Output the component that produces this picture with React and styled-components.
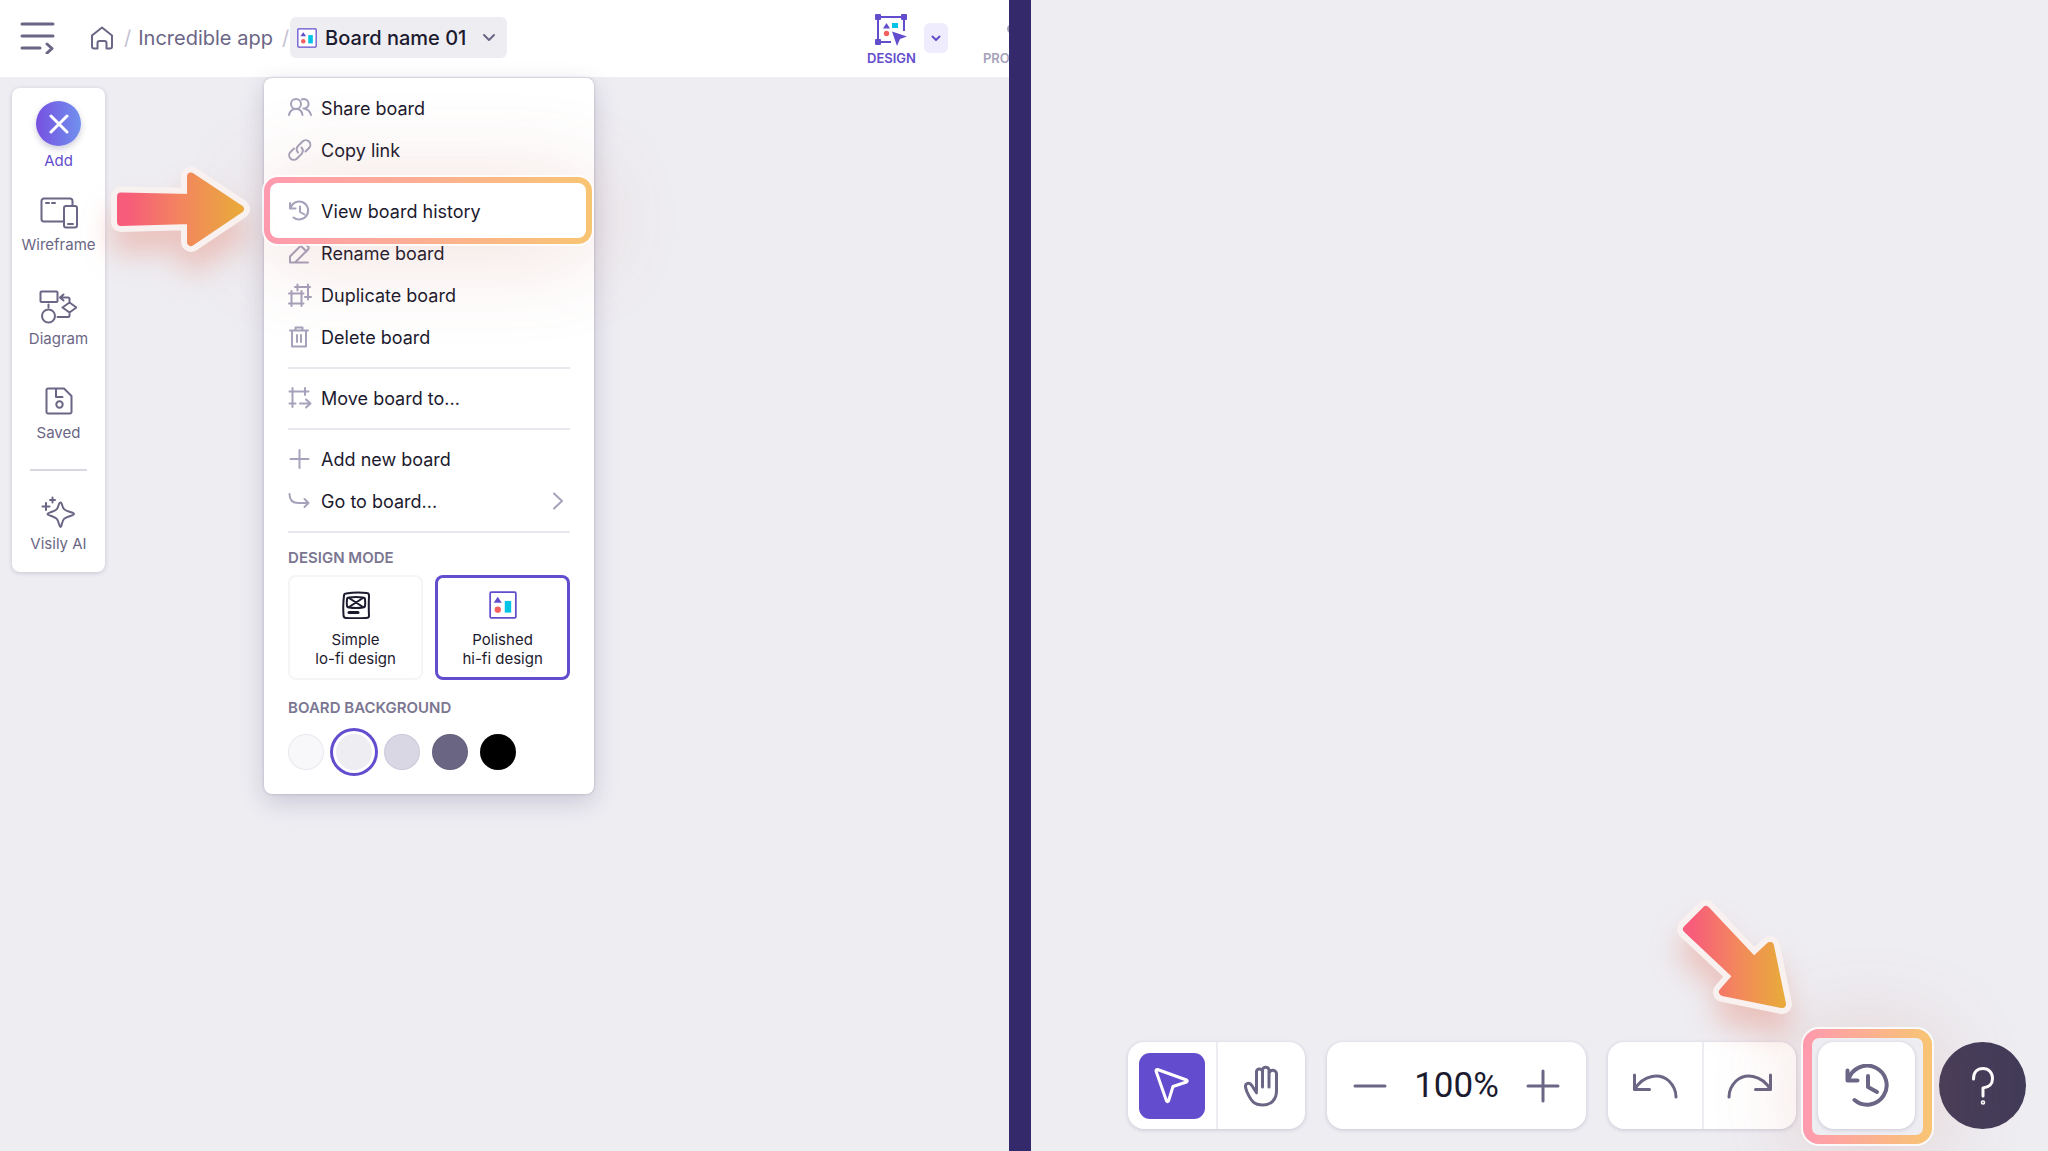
import { useState } from 'react'
import styled, { createGlobalStyle, css } from 'styled-components'

const ink = '#1c1a2e'
const slate = '#6b6685'
const mist = '#a6a2bb'
const violet = '#634dce'
const canvas = '#eeedf2'
const warm = 'linear-gradient(90deg, #ff9aaf, #f8c573)'
const glow = '0 0 0 2px rgba(255, 255, 255, 0.8), 0 8px 90px 4px rgba(180, 96, 76, 0.2)'

const menuGroups = [
  [
    { icon: 'people', label: 'Share board' },
    { icon: 'link', label: 'Copy link' },
  ],
  [
    { icon: 'history', label: 'View board history', marked: true },
    { icon: 'pencil', label: 'Rename board' },
    { icon: 'frames', label: 'Duplicate board' },
    { icon: 'trash', label: 'Delete board' },
  ],
  [{ icon: 'move', label: 'Move board to...' }],
  [
    { icon: 'plus', label: 'Add new board' },
    { icon: 'goto', label: 'Go to board...', more: true },
  ],
]

const swatches = [
  { name: 'Snow', color: '#f8f8fa' },
  { name: 'Fog', color: '#eeedf2' },
  { name: 'Lavender', color: '#d9d7e4' },
  { name: 'Slate', color: '#6a6582' },
  { name: 'Black', color: '#000000' },
]

export default function App() {
  const [mode, setMode] = useState('polished')
  const [background, setBackground] = useState('Fog')

  return (
    <Page>
      <GlobalStyle />
      <Pane>
        <Header>
          <PlainButton aria-label='Menu'>
            <Line width='35' height='32' sw='3'>
              <path d='M2 2h31M2 14h31M2 26h18M27 22l5 4.500-5 4.500' />
            </Line>
          </PlainButton>
          <Crumbs>
            <HomeLink href='#home' aria-label='Home'>
              <Line width='24' height='24' sw='2'>
                <path d='M2 9.500L12 1.500l10 8V20.500a2 2 0 0 1-2 2h-3.500V17a2 2 0 0 0-2-2h-5a2 2 0 0 0-2 2v5.500H4a2 2 0 0 1-2-2z' />
              </Line>
            </HomeLink>
            <Slash>/</Slash>
            <AppLink href='#app'>Incredible app</AppLink>
            <Slash>/</Slash>
          </Crumbs>
          <BoardPicker>
            <BoardButton>
              <HifiIcon size={20} />
              Board name 01
              <Line width='14' height='9' sw='2'><path d='M2 2l5 5 5-5' /></Line>
            </BoardButton>
            <Menu>
              {menuGroups.map((group, i) => (
                <MenuGroup key={i}>
                  {group.map(item => (
                    <MenuItem key={item.label} $marked={item.marked}>
                      <MenuIcon name={item.icon} />
                      <span>{item.label}</span>
                      {item.more && <Line width='12' height='18' sw='2'><path d='M2 1.500l8 7.500-8 7.500' /></Line>}
                    </MenuItem>
                  ))}
                </MenuGroup>
              ))}
              <Section>
                <Legend>DESIGN MODE</Legend>
                <Modes>
                  <ModeCard $on={mode === 'simple'}>
                    <HiddenInput type='radio' name='mode' checked={mode === 'simple'} onChange={() => setMode('simple')} />
                    <LofiIcon />
                    <span>Simple<br />lo-fi design</span>
                  </ModeCard>
                  <ModeCard $on={mode === 'polished'}>
                    <HiddenInput type='radio' name='mode' checked={mode === 'polished'} onChange={() => setMode('polished')} />
                    <HifiIcon size={28} />
                    <span>Polished<br />hi-fi design</span>
                  </ModeCard>
                </Modes>
              </Section>
              <Section>
                <Legend>BOARD BACKGROUND</Legend>
                <Swatches>
                  {swatches.map(s => (
                    <Swatch key={s.name} $color={s.color} $on={background === s.name}>
                      <HiddenInput
                        type='radio'
                        name='background'
                        aria-label={s.name}
                        checked={background === s.name}
                        onChange={() => setBackground(s.name)}
                      />
                    </Swatch>
                  ))}
                </Swatches>
              </Section>
            </Menu>
          </BoardPicker>
          <Tabs>
            <Tab $on>
              <DesignIcon />
              DESIGN
            </Tab>
            <TabMore aria-label='Design options'>
              <Line width='10' height='7' sw='2'><path d='M1.500 1.500L5 5l3.500-3.500' /></Line>
            </TabMore>
            <Tab>
              <Line width='32' height='32' sw='2'><circle cx='5' cy='15' r='3' /><path d='M8 15h16' /></Line>
              PROTOTYPE
            </Tab>
          </Tabs>
        </Header>

        <Sidebar>
          <AddTool>
            <AddCircle>
              <Line width='20' height='20' sw='3'><path d='M2 2l16 16M18 2L2 18' /></Line>
            </AddCircle>
            Add
          </AddTool>
          <Tools>
            <Tool>
              <ToolIcon>
                <Line width='38' height='32' sw='2'>
                  <path d='M24 24.500H4a2.500 2.500 0 0 1-2.500-2.500V4A2.500 2.500 0 0 1 4 1.500h26A2.500 2.500 0 0 1 32.500 4v4M6 6h3M12 6h3M28 27h5' />
                  <rect x='24' y='9' width='13' height='21.500' rx='2' />
                </Line>
              </ToolIcon>
              Wireframe
            </Tool>
            <Tool>
              <ToolIcon>
                <Line width='38' height='34' sw='2'>
                  <rect x='1.500' y='1.500' width='17' height='10.500' rx='1' />
                  <circle cx='9.500' cy='26' r='6.500' />
                  <path d='M9.500 14.500v3M18.500 27H29q1.500 0 1.500-1.500V24M30.500 11.500V9q0-1.500-1.500-1.500h-8M24.500 4.500l-3.500 3 3.500 3' />
                  <path d='M30.500 12.500l7 5-7 5-7-5z' />
                </Line>
              </ToolIcon>
              Diagram
            </Tool>
            <Tool>
              <ToolIcon>
                <Line width='28' height='28' sw='2'>
                  <path d='M3 1.500h16l7.500 7.500v16a1.500 1.500 0 0 1-1.500 1.500H3A1.500 1.500 0 0 1 1.500 25V3A1.500 1.500 0 0 1 3 1.500zM11 1.500v8.500h6.500' />
                  <circle cx='14.500' cy='17.500' r='3.200' />
                </Line>
              </ToolIcon>
              Saved
            </Tool>
          </Tools>
          <SideRule />
          <Tool>
            <ToolIcon>
              <Line width='34' height='34' sw='2'>
                <path d='M19.500 7.500c.8 0 1 .5 1.300 1.500 1.400 5 2 6 7.700 7.800 2.700.9 4.500 1.200 4.500 2.200s-1.800 1.400-4.500 2.200c-5.700 1.800-6.300 2.800-7.700 7.800-.3 1.600-.6 3-1.300 3s-1-1.400-1.500-3c-1.500-5-2-6-7-7.800-2.400-.8-4.500-1.200-4.500-2.200s2.100-1.300 4.500-2.200c5-1.800 5.500-2.800 7-7.800.4-1 .7-1.500 1.500-1.500zM5 8v7M1.500 11.500h7M11.500 2.500v5M9 5h5' />
              </Line>
            </ToolIcon>
            Visily AI
          </Tool>
        </Sidebar>

        <LeftArrow viewBox='0 0 160 100' width='160' height='100'>
          <defs>
            <linearGradient id='warmA' x1='0' x2='1'>
              <stop offset='0.06' stopColor='#f75c7a' />
              <stop offset='0.5' stopColor='#f3855f' />
              <stop offset='1' stopColor='#e9a93b' />
            </linearGradient>
          </defs>
          <ArrowHalo d='M13 36.500L83 38V16.500L132 49 83 82V60L13 62z' />
          <ArrowBody fill='url(#warmA)' stroke='url(#warmA)' d='M13 36.500L83 38V16.500L132 49 83 82V60L13 62z' />
        </LeftArrow>
      </Pane>

      <Divider />

      <Pane>
        <Bottom>
          <BarGroup>
            <BarCell $wide={88}>
              <ActiveTool aria-label='Select'>
                <Line width='38' height='38' sw='3'>
                  <path d='M4.500 2.500L33.500 13q1.500 1 0 2L20 19.500 15.500 34q-1 1.500-2 0L3 4q0-1.500 1.500-1.500z' />
                </Line>
              </ActiveTool>
            </BarCell>
            <BarCell $wide={89}>
              <PlainButton aria-label='Pan'>
                <Line width='36' height='42' sw='3'>
                  <path d='M12.500 26V7.500a2.800 2.800 0 0 1 6-1V22M18.500 8V5a3.300 3.300 0 0 1 6.500 0v17M25 8.500a3.500 3.500 0 0 1 7.500 1V26c0 9-6 14-13.500 14C10 40 7 36 2.800 26.500L1.700 23c-.6-2.500 0-4 1.800-4.600 2-.6 3.300.4 4.500 2.400l4.500 7' />
                </Line>
              </PlainButton>
            </BarCell>
          </BarGroup>
          <BarGroup>
            <Zoom>
              <PlainButton aria-label='Zoom out'>
                <Line width='34' height='34' sw='3'><path d='M2 17h30' /></Line>
              </PlainButton>
              <ZoomValue>100%</ZoomValue>
              <PlainButton aria-label='Zoom in'>
                <Line width='34' height='34' sw='3'><path d='M2 17h30M17 2v30' /></Line>
              </PlainButton>
            </Zoom>
          </BarGroup>
          <BarGroup>
            <BarCell $wide={94}>
              <PlainButton aria-label='Undo'>
                <Line width='46' height='26' sw='3'><path d='M2.500 2v14.500h15M2.500 16.500C12 1 28 0 37 8q7 7 7 16' /></Line>
              </PlainButton>
            </BarCell>
            <BarCell $wide={94}>
              <PlainButton aria-label='Redo'>
                <Line width='46' height='26' sw='3'><path d='M43.500 2v14.500h-15M43.500 16.500C34 1 18 0 9 8q-7 7-7 16' /></Line>
              </PlainButton>
            </BarCell>
          </BarGroup>
          <MarkedGroup>
            <BarCell $wide={97}>
              <PlainButton aria-label='Board history'>
                <Line width='44' height='44' sw='4'>
                  <path d='M2.500 6.500v10h10M3.500 15.500A19.500 19.500 0 1 1 9.500 36' />
                  <path d='M23 12v11l9 5' />
                </Line>
              </PlainButton>
            </BarCell>
          </MarkedGroup>
          <HelpButton aria-label='Help'>
            <Line width='24' height='40' sw='3'>
              <path d='M2.500 13c0-7 4-10.500 9.500-10.500s9.500 4 9.500 10-3 8.500-9.500 9.500v8' />
              <circle cx='12' cy='36.500' r='0.800' />
            </Line>
          </HelpButton>
          <RightArrow viewBox='0 0 140 140' width='140' height='140'>
            <defs>
              <linearGradient id='warmB' x1='0' x2='1'>
                <stop offset='0.05' stopColor='#f75c7a' />
                <stop offset='0.5' stopColor='#f3855f' />
                <stop offset='1' stopColor='#e9a93b' />
              </linearGradient>
            </defs>
            <ArrowHalo d='M40 26L21 45 71 92 57 108 116 120 104 62 88 77z' />
            <ArrowBody fill='url(#warmB)' stroke='url(#warmB)' d='M40 26L21 45 71 92 57 108 116 120 104 62 88 77z' />
          </RightArrow>
        </Bottom>
      </Pane>
    </Page>
  )
}

// stroke icon, drawn 1:1 with its box
function Line({ width, height, sw, children }) {
  return (
    <svg
      width={width}
      height={height}
      viewBox={`0 0 ${width} ${height}`}
      fill='none'
      stroke='currentColor'
      strokeWidth={sw}
      strokeLinecap='round'
      strokeLinejoin='round'
      aria-hidden='true'
    >
      {children}
    </svg>
  )
}

function MenuIcon({ name }) {
  const shapes = {
    people: (
      <>
        <circle cx='8' cy='8' r='5' />
        <path d='M1 19c.8-4 3-6 7-6s6 2 6.500 6M14 3.500a4.700 4.700 0 1 1 1.500 9M17 13c3.500.5 5 2.500 6 6' />
      </>
    ),
    link: <path d='M10 14.500a5 5 0 0 1 0-6.500l4.500-4.500a4.500 4.500 0 0 1 6.500 6.500l-3.500 3.500M13.500 9.500a5 5 0 0 1 0 6.500L9 20.500A4.500 4.500 0 0 1 2.500 14L6 10.500' />,
    history: <path d='M2 4v5.500h5.500M2.500 9A9 9 0 1 1 5.500 18.500M12 7.500V13l4.500 2.500' />,
    pencil: <path d='M2 21.500h18M2 21.500v-6L14.500 3q1.500-1.500 3 0l2.500 2.500q1.500 1.500 0 3L7 21.500M13 5l5.500 5.500' />,
    frames: <path d='M1 10.500h14.500M1 20.500h14.500M3.500 8v15M13.500 8v15M7 4h15M9.500 1.500v6M20 1.500v15M17 14h6' />,
    trash: <path d='M2 5.500h18M4 5.500v16h14v-16M7.500 5V2.500h7V5M9 10v7M13 10v7' />,
    move: <path d='M1.500 5.500h19M1.500 17.500h6M4.500 2v19M17 2v7M12 17.500h10M18 13.500l4.500 4-4.500 4' />,
    plus: <path d='M2.500 12h18M11.500 3v18' />,
    goto: <path d='M1.500 5c0 6 3 9 9 9h10M16.500 10l4 4-4 4' />,
  }
  return <Line width='24' height='24' sw='2'>{shapes[name]}</Line>
}

function HifiIcon({ size }) {
  return (
    <svg width={size} height={size} viewBox='1 1 24 24' aria-hidden='true'>
      <rect x='2' y='2' width='22' height='22' rx='1' fill='#fff' stroke={violet} strokeWidth='1.500' />
      <path d='M8.500 6l3.500 5H5z' fill={violet} />
      <circle cx='8.500' cy='17' r='2.700' fill='#f65f5f' />
      <rect x='14.500' y='9.500' width='5.500' height='10' fill='#00c3e6' />
    </svg>
  )
}

function LofiIcon() {
  return (
    <svg width='28' height='28' viewBox='0 0 28 28' fill='none' stroke={ink} strokeWidth='2' strokeLinecap='round' aria-hidden='true'>
      <path d='M4 2.500Q14 1 25 2q2 0 2 3-.5 10 0 20 0 2-3 2Q14 27.500 4 27q-2.500 0-2.500-3Q.8 14 2 4.500q.3-2 2-2z' />
      <path d='M7 6.500q7-1 14 0 2 0 2 2 .5 4 0 6 0 2-2 2-7 1-14 0-2 0-2-2-.5-3 0-6 0-2 2-2zM7 7l14 9M21 7l-14 9' />
      <path d='M7 21.500h9' strokeWidth='3' />
    </svg>
  )
}

function DesignIcon() {
  return (
    <svg width='32' height='32' viewBox='0 0 32 32' fill={violet} aria-hidden='true'>
      <path d='M3 3h26v14M3 3v25h13' fill='none' stroke={violet} strokeWidth='2' />
      <rect x='0' y='0' width='6' height='6' rx='1' />
      <rect x='26' y='0' width='6' height='6' rx='1' />
      <rect x='0' y='25' width='6' height='6' rx='1' />
      <path d='M11.500 9l3.500 5.500H8z' />
      <rect x='17' y='9' width='6' height='5' fill='#00c3e6' />
      <circle cx='11.500' cy='19.500' r='2.700' fill='#f65f5f' />
      <path d='M17 17.500l15 5-7 2.500-3 7z' />
    </svg>
  )
}

const GlobalStyle = createGlobalStyle`
  body {
    margin: 0;
    font-family: Inter, Roboto, sans-serif;
    color: ${ink};
    background: ${canvas};
  }
  *, *::before {
    box-sizing: border-box;
  }
  svg {
    display: block;
    flex: none;
  }
  button {
    font: inherit;
    color: inherit;
    border: 0;
    padding: 0;
    background: none;
    cursor: pointer;
  }
`

const Page = styled.main`
  display: grid;
  grid-template-columns: minmax(0, 1009fr) 22px minmax(0, 1017fr);
  min-height: 100vh;
  overflow: hidden;
`

const Pane = styled.section`
  position: relative;
  display: flex;
  flex-direction: column;
  background: ${canvas};
`

const Divider = styled.div`
  position: relative;
  z-index: 3;
  background: #33296b;
`

const PlainButton = styled.button`
  display: flex;
  color: ${slate};
`

const Header = styled.header`
  display: flex;
  align-items: center;
  height: 77px;
  padding: 0 0 2px 20px;
  background: #fff;
`

const Crumbs = styled.nav`
  display: flex;
  align-items: center;
  margin-left: 35px;
  font-size: 20px;
  line-height: 28px;
`

const HomeLink = styled.a`
  margin-right: 10px;
  color: ${slate};
`

const AppLink = styled.a`
  margin: 0 9px 0 7px;
  color: ${slate};
  text-decoration: none;
`

const Slash = styled.span`
  color: #c4c1d2;
`

const BoardPicker = styled.div`
  position: relative;
  z-index: 2;
`

const BoardButton = styled.button`
  display: flex;
  align-items: center;
  gap: 8px;
  height: 41px;
  margin-left: 1px;
  padding: 0 11px 0 7px;
  border-radius: 6px;
  background: ${canvas};
  font-size: 20px;
  font-weight: 500;
  white-space: nowrap;

  svg:last-child {
    margin-left: 8px;
    color: ${slate};
  }
`

const Menu = styled.div`
  position: absolute;
  top: calc(100% + 20px);
  left: -25px;
  width: 330px;
  padding: 9px 24px 24px;
  border-radius: 8px;
  background: #fff;
  box-shadow: 0 8px 24px rgba(60, 50, 100, 0.2), 0 0 3px rgba(60, 50, 100, 0.25);
`

const MenuGroup = styled.div`
  &::after {
    content: '';
    display: block;
    height: 2px;
    margin: 9px 0 8px;
    background: #e9e8ee;
  }
`

const MenuItem = styled.button`
  position: relative;
  display: flex;
  align-items: center;
  gap: 9px;
  width: 100%;
  height: 42px;
  text-align: left;
  font-size: 18px;

  svg {
    position: relative;
    color: ${mist};
  }
  span {
    position: relative;
    flex: 1;
  }
  svg:last-child {
    margin-right: 6px;
  }

  ${p => p.$marked && css`
    z-index: 1;

    &::before {
      content: '';
      position: absolute;
      inset: -13px -22px -12px -24px;
      border: 6px solid transparent;
      border-radius: 14px;
      background: linear-gradient(#fff, #fff) padding-box, ${warm} border-box;
      box-shadow: ${glow};
    }
  `}
`

const Section = styled.fieldset`
  margin: 0 0 11px;
  padding: 0;
  border: 0;

  &:last-child {
    margin-bottom: 0;
  }
`

const Legend = styled.legend`
  padding: 7px 0;
  font-size: 15px;
  font-weight: 600;
  line-height: 20px;
  color: #7b7692;
`

const Modes = styled.div`
  display: grid;
  grid-template-columns: 1fr 1fr;
  gap: 12px;
`

const HiddenInput = styled.input`
  position: absolute;
  inset: 0;
  margin: 0;
  opacity: 0;
  cursor: pointer;
`

const ModeCard = styled.label`
  position: relative;
  display: flex;
  flex-direction: column;
  align-items: center;
  justify-content: space-between;
  height: 105px;
  padding: 16px 0 12px;
  border-radius: 8px;
  box-shadow: inset 0 0 0 ${p => p.$on ? `3px ${violet}` : '2px #f5f5f8'};
  font-size: 15px;
  line-height: 19px;
  text-align: center;
`

const Swatches = styled.div`
  display: flex;
  gap: 12px;
  padding-top: 9px;
`

const Swatch = styled.label`
  position: relative;
  width: 36px;
  height: 36px;
  border-radius: 50%;
  background: ${p => p.$color};
  box-shadow: ${p => p.$on ? `0 0 0 3px #fff, 0 0 0 6px ${violet}` : 'inset 0 0 0 1px rgba(60, 50, 100, 0.08)'};
`

const Tabs = styled.div`
  display: flex;
  align-self: flex-start;
  width: 142px;
  height: 75px;
  margin-left: auto;
  padding-top: 14px;
  overflow: hidden;
`

const Tab = styled.button`
  display: flex;
  flex: none;
  flex-direction: column;
  align-items: center;
  gap: 4px;
  height: 56px;
  font-size: 13px;
  font-weight: 600;
  line-height: 16px;
  color: ${p => p.$on ? violet : mist};
`

const TabMore = styled.button`
  display: flex;
  flex: none;
  align-items: center;
  justify-content: center;
  width: 24px;
  height: 30px;
  margin: 9px 35px 0 8px;
  border-radius: 6px;
  background: #efecfd;
  color: ${violet};
`

const Sidebar = styled.aside`
  display: flex;
  flex-direction: column;
  align-items: center;
  align-self: flex-start;
  width: 93px;
  margin: 11px 12px;
  padding: 13px 0 19px;
  border-radius: 8px;
  background: #fff;
  box-shadow: 0 1px 4px rgba(60, 50, 100, 0.22);
`

const Tool = styled.button`
  display: flex;
  flex-direction: column;
  align-items: center;
  gap: 5px;
  font-size: 15px;
  line-height: 18px;
  color: ${slate};
`

const AddTool = styled(Tool)`
  gap: 6px;
  margin-bottom: 25px;
  color: ${violet};
`

const AddCircle = styled.span`
  display: grid;
  place-items: center;
  width: 45px;
  height: 45px;
  border-radius: 50%;
  background: linear-gradient(90deg, #7650e0, #7191ee);
  color: #fff;
  box-shadow: 0 3px 6px rgba(60, 50, 100, 0.25);
`

const ToolIcon = styled.span`
  display: grid;
  place-items: center;
  height: 36px;
`

const Tools = styled.div`
  display: flex;
  flex-direction: column;
  align-items: center;
  gap: 35px;
`

const SideRule = styled.hr`
  width: 57px;
  height: 2px;
  margin: 27px 0 23px;
  border: 0;
  background: #d9d7e4;
`

const arrow = css`
  position: absolute;
  z-index: 2;
  overflow: visible;
  pointer-events: none;
  filter: drop-shadow(0 22px 14px rgba(226, 110, 84, 0.32));
`

const LeftArrow = styled.svg`
  ${arrow}
  top: 160px;
  left: 108px;
`

const RightArrow = styled.svg`
  ${arrow}
  right: 242px;
  bottom: 127px;
`

const ArrowHalo = styled.path`
  fill: #f8f1f0;
  stroke: #f8f1f0;
  stroke-width: 20px;
  stroke-linejoin: round;
`

const ArrowBody = styled.path`
  stroke-width: 8px;
  stroke-linejoin: round;
`

const Bottom = styled.footer`
  position: relative;
  display: flex;
  justify-content: flex-end;
  gap: 22px;
  margin-top: auto;
  padding: 0 22px;
  padding-bottom: 22px;
`

const BarGroup = styled.div`
  position: relative;
  display: flex;
  height: 87px;
  border-radius: 16px;
  background: #fff;
  box-shadow: 0 1px 4px rgba(60, 50, 100, 0.2);
`

const BarCell = styled.div`
  position: relative;
  display: flex;
  align-items: center;
  justify-content: center;
  width: ${p => p.$wide}px;

  & + & {
    border-left: 2px solid ${canvas};
  }
`

const MarkedGroup = styled(BarGroup)`
  background: none;
  box-shadow: none;

  &::before {
    content: '';
    position: absolute;
    inset: -13px -17px -15px -15px;
    border: 9px solid transparent;
    border-radius: 16px;
    background: linear-gradient(${canvas}, ${canvas}) padding-box, ${warm} border-box;
    box-shadow: ${glow};
  }

  ${BarCell} {
    border-radius: 16px;
    background: #fff;
    box-shadow: 0 1px 4px rgba(60, 50, 100, 0.2);
  }
`

const ActiveTool = styled.button`
  display: grid;
  place-items: center;
  width: 66px;
  height: 66px;
  border-radius: 11px;
  background: ${violet};
  color: #fff;
`

const Zoom = styled.div`
  display: flex;
  align-items: center;
  justify-content: space-between;
  width: 259px;
  padding: 0 26px;
`

const ZoomValue = styled.output`
  font-family: Roboto, Inter, sans-serif;
  font-size: 35px;
  line-height: 40px;
`

const HelpButton = styled.button`
  display: grid;
  place-items: center;
  width: 87px;
  height: 87px;
  margin-left: 2px;
  border-radius: 50%;
  background: #433c59;
  color: #fff;
`
